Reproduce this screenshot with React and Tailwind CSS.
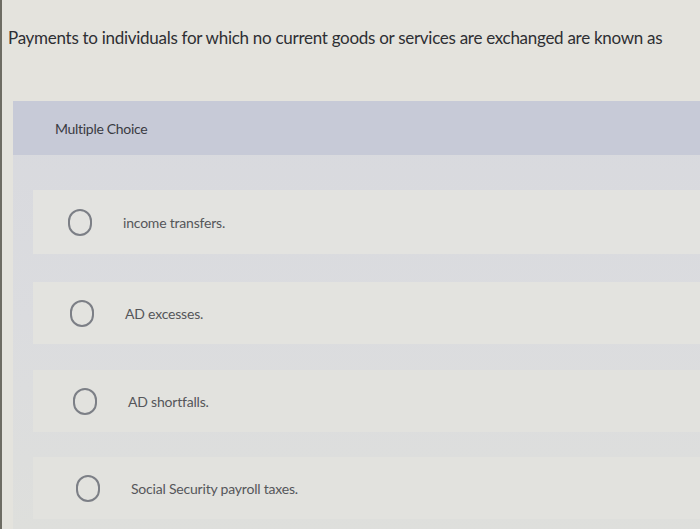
export default function App() {
  const options = [
    { text: "income transfers.", pl: "pl-[35px]", tl: "ml-[31px]", card: "bg-[#e3e3e0]", h: "h-[64px]", mt: "mt-[35px]" },
    { text: "AD excesses.", pl: "pl-[37px]", tl: "ml-[31px]", card: "bg-[#e3e3df]", h: "h-[62px]", mt: "mt-[28px]" },
    { text: "AD shortfalls.", pl: "pl-[40px]", tl: "ml-[31px]", card: "bg-[#e2e2de]", h: "h-[62px]", mt: "mt-[26px]" },
    { text: "Social Security payroll taxes.", pl: "pl-[43px]", tl: "ml-[31px]", card: "bg-[#e2e2de]", h: "h-[62px]", mt: "mt-[25px]" },
  ];
  return (
    <div
      className="w-[700px] h-[529px] overflow-hidden flex bg-[#e4e3dd]"
      style={{ fontFamily: "Lato, 'Open Sans', sans-serif" }}
    >
      <div className="w-[2px] h-full bg-[#6d6c63]" />
      <div className="flex-1 flex flex-col">
        <div className="h-[101px] pl-[6px] pt-[28px]">
          <p className="text-[17px] leading-[20px] text-[#2e2f33] tracking-[-0.28px]">
            Payments to individuals for which no current goods or services are exchanged are known as
          </p>
        </div>
        <div className="ml-[11px] flex-1 flex flex-col bg-linear-to-b from-[#d8d9de] via-[#dbdcdf] to-[#dedfdc]">
          <div className="h-[54px] bg-[#c7cad7] flex items-center pl-[42px]">
            <span className="text-[14px] text-[#3a3b42] tracking-[-0.3px]">Multiple Choice</span>
          </div>
          <div className="flex flex-col pl-[20px]">
            {options.map((o, i) => (
              <div key={i} className={`${o.mt} ${o.h} ${o.card} flex items-center ${o.pl}`}>
                <div className="w-[24px] h-[27px] rounded-full border-[2px] border-[#7c7f86]" />
                <span className={`${o.tl} text-[14px] text-[#55565a] tracking-[-0.2px]`}>{o.text}</span>
              </div>
            ))}
          </div>
        </div>
      </div>
    </div>
  );
}
